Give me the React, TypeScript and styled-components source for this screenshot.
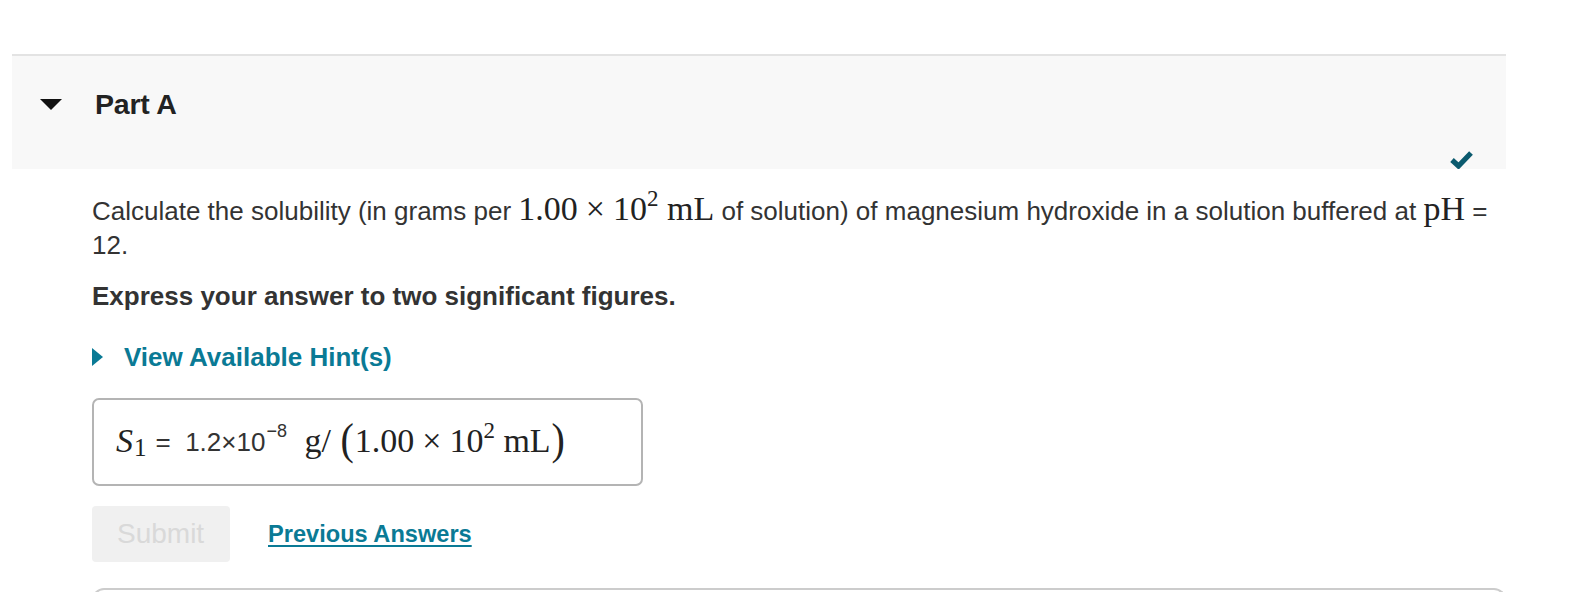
import React from "react";
import styled, { createGlobalStyle } from "styled-components";

const GlobalStyle = createGlobalStyle`
  html, body {
    margin: 0;
    padding: 0;
    background: #ffffff;
  }
  body {
    font-family: "Liberation Sans", Arial, Helvetica, sans-serif;
    color: #333333;
  }
`;

const Page = styled.div`
  width: 1494px;
  padding: 54px 0 0 12px;
`;

const Header = styled.div`
  display: flex;
  height: 113px;
  background: #f8f8f8;
  border-top: 2px solid #e3e3e3;
`;

const HeaderMain = styled.div`
  display: flex;
  align-items: center;
  gap: 33px;
  height: 32px;
  padding: 32px 0 0 28px;
`;

const Title = styled.h2`
  margin: 0;
  font-size: 28.5px;
  font-weight: 700;
  color: #222222;
  letter-spacing: -0.2px;
`;

const CheckMark = styled.svg`
  align-self: flex-end;
  margin-left: auto;
  margin-right: 32px;
`;

const Body = styled.div`
  padding-left: 80px;
`;

const Question = styled.p`
  margin: 25px 0 0;
  font-size: 26px;
  line-height: 34px;
  color: #333333;
  width: 1400px;
`;

const Math = styled.span<{ $size?: number }>`
  font-family: "Liberation Serif", "Times New Roman", serif;
  font-size: ${(p) => p.$size ?? 34}px;
  line-height: 26px;
  color: #222222;
  white-space: nowrap;
`;

const Times = styled.span`
  padding: 0 8px;
`;

const Sup = styled.span<{ $size?: number }>`
  font-size: ${(p) => p.$size ?? 23}px;
  position: relative;
  top: -0.6em;
`;

const Sub = styled.span`
  font-size: 25px;
  position: relative;
  top: 4px;
  margin: 0 9px 0 1px;
`;

const SciExp = styled.span`
  font-family: "Liberation Sans", Arial, sans-serif;
  font-size: 18px;
  color: #333333;
  position: relative;
  top: -11px;
  margin: 0 9px 0 1px;
`;

const Emph = styled.p`
  margin: 17px 0 0;
  font-size: 26px;
  line-height: 34px;
  font-weight: 700;
  color: #333333;
`;

const HintRow = styled.div`
  display: flex;
  align-items: center;
  gap: 21px;
  height: 34px;
  margin-top: 27px;
`;

const HintLink = styled.a`
  font-size: 26px;
  font-weight: 700;
  color: #0a7a95;
  text-decoration: none;
`;

const AnswerBox = styled.div`
  display: flex;
  align-items: center;
  box-sizing: border-box;
  width: 551px;
  height: 88px;
  margin-top: 24px;
  padding-left: 22px;
  border: 2px solid #b4b4b4;
  border-radius: 7px;
  color: #222222;
`;

const Sans = styled.span`
  font-family: "Liberation Sans", Arial, sans-serif;
  font-size: 26px;
  color: #333333;
  white-space: pre;
`;

const Paren = styled.span`
  display: inline-block;
  font-size: 40px;
  transform: scaleY(1.12);
  margin: 0 1px;
`;

const Actions = styled.div`
  display: flex;
  align-items: center;
  gap: 38px;
  margin-top: 20px;
`;

const SubmitButton = styled.button`
  width: 138px;
  height: 56px;
  border: none;
  border-radius: 4px;
  background: #f0f0f0;
  color: #d9d9d9;
  font-family: "Liberation Sans", Arial, sans-serif;
  font-size: 28px;
  text-align: left;
  padding-left: 25px;
`;

const PrevLink = styled.a`
  font-size: 23.6px;
  font-weight: 700;
  color: #0a7a95;
  text-decoration: underline;
  text-underline-offset: 3px;
  text-decoration-thickness: 2px;
`;

const NextPanel = styled.div`
  height: 40px;
  width: 1410px;
  margin-top: 26px;
  border: 2px solid #cccccc;
  border-bottom: none;
  border-radius: 12px 12px 0 0;
`;

export default function App() {
  return (
    <Page>
      <GlobalStyle />
      <Header>
        <HeaderMain>
          <svg width="22" height="11" viewBox="0 0 22 11">
            <polygon points="0,0 22,0 11,11" fill="#111111" />
          </svg>
          <Title>Part A</Title>
        </HeaderMain>
        <CheckMark width="25" height="19" viewBox="0 0 25 19">
          <polyline
            points="3,10 9.5,16 22,3"
            fill="none"
            stroke="#0b5a6e"
            strokeWidth="5.2"
            strokeLinejoin="miter"
          />
        </CheckMark>
      </Header>
      <Body>
        <Question>
          Calculate the solubility (in grams per{" "}
          <Math>
            1.00<Times>×</Times>10<Sup>2</Sup> mL
          </Math>{" "}
          of solution) of magnesium hydroxide in a solution buffered at{" "}
          <Math>pH</Math> = 12.
        </Question>
        <Emph>Express your answer to two significant figures.</Emph>
        <HintRow>
          <svg width="11" height="18" viewBox="0 0 11 18">
            <polygon points="0,0 11,9 0,18" fill="#0a7a95" />
          </svg>
          <HintLink>View Available Hint(s)</HintLink>
        </HintRow>
        <AnswerBox>
          <Math>
            <i>S</i>
            <Sub>1</Sub>
          </Math>
          <Sans>{"=  1.2×10"}</Sans>
          <SciExp>−8</SciExp>
          <Math>
            &nbsp;g/&nbsp;<Paren>(</Paren>1.00<Times>×</Times>10<Sup>2</Sup> mL<Paren>)</Paren>
          </Math>
        </AnswerBox>
        <Actions>
          <SubmitButton disabled>Submit</SubmitButton>
          <PrevLink>Previous Answers</PrevLink>
        </Actions>
        <NextPanel />
      </Body>
    </Page>
  );
}
